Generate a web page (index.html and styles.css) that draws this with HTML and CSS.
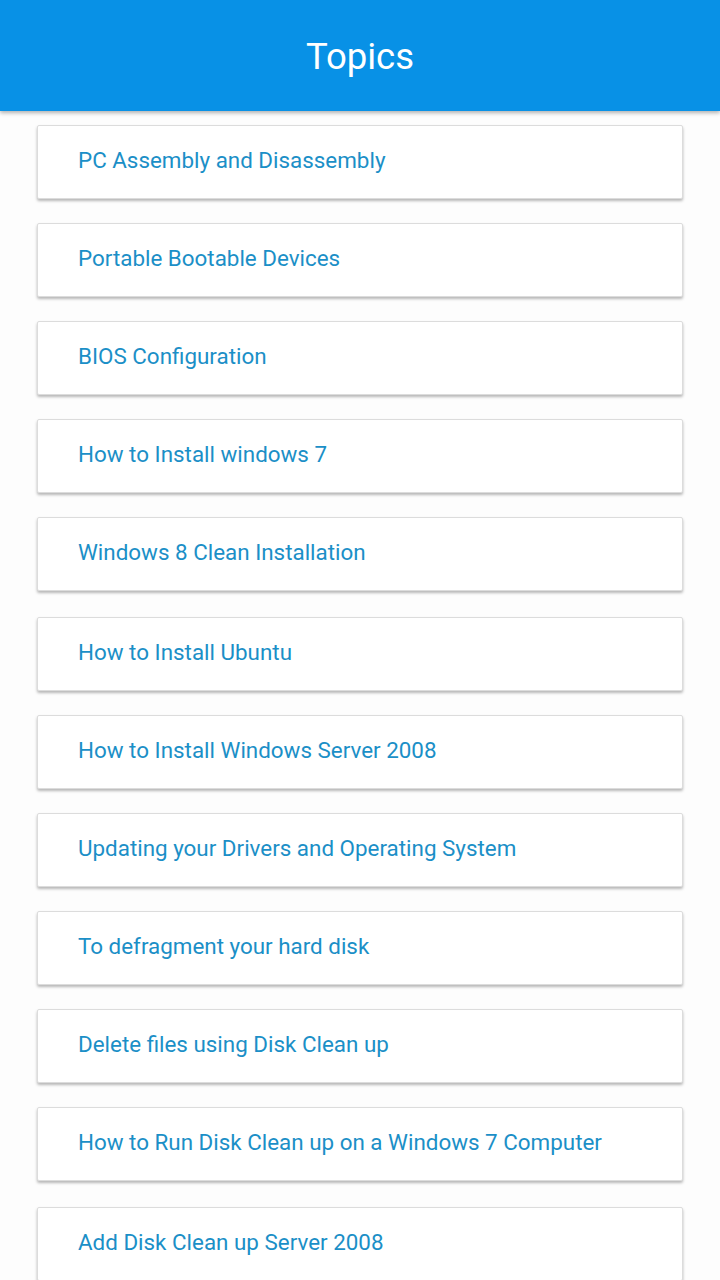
FILE: index.html
```html
<!DOCTYPE html>
<html>
<head>
<meta charset="utf-8">
<link rel="stylesheet" href="styles.css">
</head>
<body>
<header class="appbar"><h1 class="title">Topics</h1></header>
<main class="list">
  <div class="card">PC Assembly and Disassembly</div>
  <div class="card">Portable Bootable Devices</div>
  <div class="card">BIOS Configuration</div>
  <div class="card">How to Install windows 7</div>
  <div class="card">Windows 8 Clean Installation</div>
  <div class="card gap2">How to Install Ubuntu</div>
  <div class="card">How to Install Windows Server 2008</div>
  <div class="card">Updating your Drivers and Operating System</div>
  <div class="card">To defragment your hard disk</div>
  <div class="card">Delete files using Disk Clean up</div>
  <div class="card">How to Run Disk Clean up on a Windows 7 Computer</div>
  <div class="card gap2">Add Disk Clean up Server 2008</div>
</main>
</body>
</html>
```
FILE: styles.css
```css
html, body {
  margin: 0;
  padding: 0;
  background: #fdfdfd;
  font-family: Roboto, "Noto Sans", sans-serif;
  overflow: hidden;
  height: 1280px;
}
.appbar {
  height: 111px;
  background: #0891e6;
  display: flex;
  align-items: center;
  justify-content: center;
  box-shadow: 0 2px 4px rgba(0,0,0,0.3);
  position: relative;
  z-index: 1;
}
.title {
  margin: 0;
  color: #ffffff;
  font-weight: 400;
  font-size: 36.5px;
  line-height: 1;
  padding-top: 3px;
}
.list {
  display: flex;
  flex-direction: column;
  padding: 14px 37px 0 37px;
}
.card {
  height: 68px;
  box-sizing: content-box;
  border: 1px solid #dcdcdc;
  border-radius: 2px;
  background: #ffffff;
  box-shadow: 0 2px 3px rgba(0,0,0,0.28);
  display: flex;
  align-items: center;
  padding-left: 40px;
  padding-bottom: 4px;
  color: #1b8fc7;
  font-size: 22.4px;
  line-height: 1;
  margin-bottom: 24px;
}
.card.gap2 {
  margin-top: 2px;
}
```
